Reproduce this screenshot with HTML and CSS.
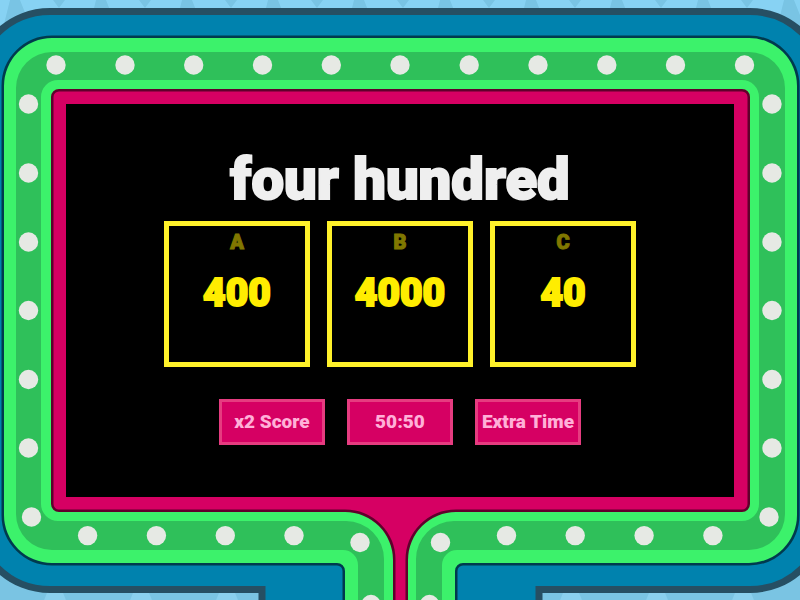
FILE: index.html
```
<!DOCTYPE html>
<html lang="en">
<head>
  <meta charset="UTF-8" />
  <meta name="viewport" content="width=device-width, initial-scale=1.0"/>
  <title>Number Quiz</title>
  <link rel="stylesheet" href="styles.css">
</head>
<body>

  <!-- Gameshow stage -->
  <svg class="stage" viewBox="0 0 800 600" preserveAspectRatio="none" aria-hidden="true">
    <defs>
      <pattern id="raysTop" x="58" width="86" height="40" patternUnits="userSpaceOnUse">
        <path d="M28 40 38 0H48L64 40ZM-5 0H7L1 8ZM81 0H93L87 8Z" fill="#79c4e4"/>
      </pattern>
      <pattern id="raysBottom" x="12" y="580" width="86" height="40" patternUnits="userSpaceOnUse">
        <path d="M24 40 37 8H49L62 40Z" fill="#8ad0ee"/>
      </pattern>
      <g id="bulbs" fill="#e6e9e4">
        <circle cx="56" cy="65" r="9.7"/>
        <circle cx="125" cy="65" r="9.7"/>
        <circle cx="193.7" cy="65" r="9.7"/>
        <circle cx="262.5" cy="65" r="9.7"/>
        <circle cx="331.3" cy="65" r="9.7"/>
        <circle cx="28.5" cy="104" r="9.7"/>
        <circle cx="28.5" cy="173" r="9.7"/>
        <circle cx="28.5" cy="242" r="9.7"/>
        <circle cx="28.5" cy="310.5" r="9.7"/>
        <circle cx="28.5" cy="379.5" r="9.7"/>
        <circle cx="28.5" cy="448" r="9.7"/>
        <circle cx="31.5" cy="517" r="9.7"/>
        <circle cx="87.6" cy="535.6" r="9.7"/>
        <circle cx="156.4" cy="535.6" r="9.7"/>
        <circle cx="225.3" cy="535.6" r="9.7"/>
        <circle cx="294" cy="535.6" r="9.7"/>
        <circle cx="360" cy="542.5" r="9.7"/>
        <circle cx="371" cy="604.5" r="9.7"/>
      </g>
    </defs>
    <rect width="800" height="300" fill="#87d2f3"/>
    <rect width="800" height="40" fill="url(#raysTop)"/>
    <rect y="300" width="800" height="300" fill="#7ac4e3"/>
    <rect y="580" width="800" height="20" fill="url(#raysBottom)"/>
    <path d="M262 620V589.5H50A74.5 74.5 0 0 1-24.5 515V86A74.5 74.5 0 0 1 50 11.5H750A74.5 74.5 0 0 1 824.5 86V515A74.5 74.5 0 0 1 750 589.5H539V620Z" fill="#0082ae" stroke="#264f63" stroke-width="7"/>
    <path d="M40 80H760V530H430V600H370V530H40Z" fill="#d60063"/>
    <path class="track" d="M345 610V571A8 8 0 0 0 337 563H52A48 48 0 0 1 4 515V86A48 48 0 0 1 52 38H749A48 48 0 0 1 797 86V515A48 48 0 0 1 749 563H463A8 8 0 0 0 455 571V610H408V560A48 48 0 0 1 456 512H742A8 8 0 0 0 750 504V97A8 8 0 0 0 742 89H59A8 8 0 0 0 51 97V504A8 8 0 0 0 59 512H345A48 48 0 0 1 393 560V610Z"/>
    <path d="M358 610V565A15 15 0 0 0 343 550H52A36 36 0 0 1 16 514V88A36 36 0 0 1 52 52H749A36 36 0 0 1 785 88V514A36 36 0 0 1 749 550H457A15 15 0 0 0 442 565V610H416V559A38 38 0 0 1 454 521H742A17 17 0 0 0 759 504V97A17 17 0 0 0 742 80H58A17 17 0 0 0 41 97V504A17 17 0 0 0 58 521H346A38 38 0 0 1 384 559V610Z" fill="#2fc05a"/>
    <path d="M66 104H734V497H66Z"/>
    <use href="#bulbs"/>
    <use href="#bulbs" transform="matrix(-1 0 0 1 800.5 0)"/>
    <circle cx="400" cy="65" r="9.7" fill="#e6e9e4"/>
  </svg>

  <main class="game">
    <h1 class="question">four hundred</h1>
    <div class="answers">
      <button class="answer" type="button"><span class="letter">A</span><span class="value">400</span></button>
      <button class="answer" type="button"><span class="letter">B</span><span class="value">4000</span></button>
      <button class="answer" type="button"><span class="letter">C</span><span class="value">40</span></button>
    </div>
    <div class="lifelines">
      <button class="lifeline" type="button">x2 Score</button>
      <button class="lifeline" type="button">50:50</button>
      <button class="lifeline" type="button">Extra Time</button>
    </div>
  </main>

</body>
</html>
```

FILE: styles.css
```
body {
  margin: 0;
  min-height: 100vh;
  font-family: Roboto, "Open Sans", sans-serif;
  font-weight: 900;
  background-color: #7ac4e3;
}
.stage {
  position: absolute;
  top: 0;
  left: 0;
  width: 100%;
  height: 100%;
}
.track {
  fill: #3cf26b;
  stroke: #000;
  stroke-opacity: 0.55;
  stroke-width: 5;
  paint-order: stroke;
}
.game {
  position: relative;
  min-height: 100vh;
  box-sizing: border-box;
  padding: 145px 66px 104px;
  display: flex;
  flex-direction: column;
  align-items: center;
}
.question {
  margin: 0 0 8px;
  font-size: 58px;
  line-height: 68px;
  font-weight: 900;
  color: #efefef;
  -webkit-text-stroke: 2px #efefef;
}
.answers {
  display: flex;
  gap: 17px;
  margin-bottom: 32px;
}
.answer,
.lifeline {
  box-sizing: border-box;
  font-family: inherit;
  font-weight: 900;
  cursor: pointer;
}
.answer {
  width: 146px;
  height: 146px;
  padding: 4px 0;
  display: flex;
  flex-direction: column;
  align-items: center;
  background: #000;
  border: 5px solid #fff12a;
  color: #ffed00;
}
.letter {
  font-size: 20px;
  line-height: 24px;
  opacity: 0.5;
  -webkit-text-stroke: 1px #ffed00;
}
.value {
  font-size: 39px;
  line-height: 78px;
  -webkit-text-stroke: 2px #ffed00;
}
.lifelines {
  display: flex;
  gap: 22px;
}
.lifeline {
  width: 106px;
  height: 46px;
  padding: 0;
  background: #d60063;
  border: 3px solid #e63c80;
  color: #ffb0d8;
  font-size: 19px;
  line-height: 24px;
  white-space: nowrap;
}
```
